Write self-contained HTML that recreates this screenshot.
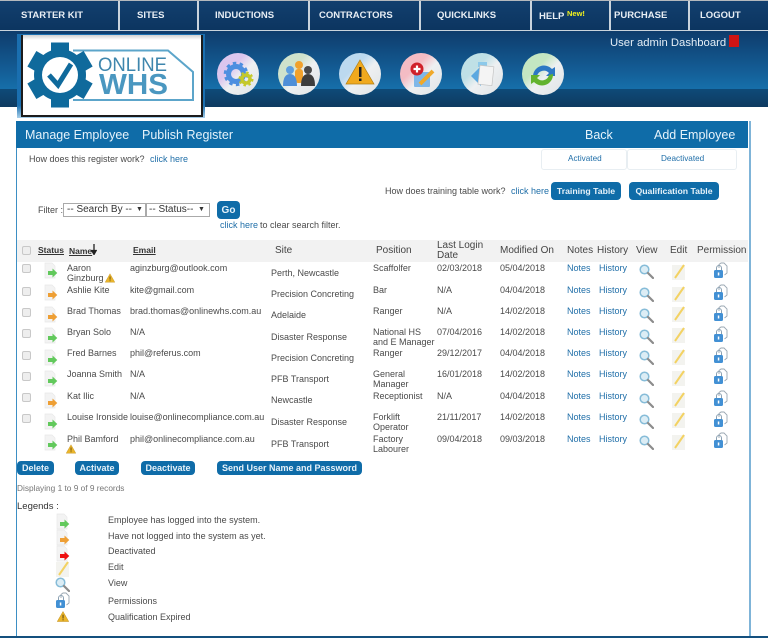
<!DOCTYPE html>
<html><head><meta charset="utf-8"><style>
html,body{margin:0;padding:0;background:#fff}
body{width:768px;height:638px;position:relative;overflow:hidden;font-family:"Liberation Sans",sans-serif;font-size:9px;color:#4a4a4a;filter:blur(.35px)}
div,a,svg,span.a{position:absolute}
.t{line-height:12px;white-space:nowrap}
.l{color:#1f6ea8}
.n{line-height:14px;white-space:nowrap;color:#e8eef4;font-weight:bold;font-size:9.500px;top:9px}
.d{top:1px;width:2px;height:29px;background:#c9d3dc}
.h{top:128px;line-height:15px;font-size:12.500px;color:#e6f3fb;white-space:nowrap}
.b{background:#0f6ca8;border-radius:4px;color:#e6f2fa;font-weight:bold;text-align:center;white-space:nowrap;font-size:9px}
.c{left:22px;width:7px;height:7px;border:1px solid #c8c8c8;border-radius:2px;background:#eee}
.th{font-size:10px;color:#444}
.u{font-weight:bold;text-decoration:underline;color:#333;font-size:8.500px}
.r{border-radius:50%;width:42px;height:42px;top:53px}
</style></head><body>
<svg width="0" height="0" style="left:0;top:0"><defs>
<symbol id="pg" viewBox="0 0 14 17"><path d="M1 1h7l3 3v12H1z" fill="#f3f3f3" stroke="#e8e8e8" stroke-width=".7"/></symbol>
<symbol id="sg" viewBox="0 0 14 17"><use href="#pg" width="14" height="17"/><path d="M4 9h4.500V6.500l4.800 4.500-4.800 4.500V13H4z" fill="#62c95c"/></symbol>
<symbol id="so" viewBox="0 0 14 17"><use href="#pg" width="14" height="17"/><path d="M4 9h4.500V6.500l4.800 4.500-4.800 4.500V13H4z" fill="#ee9f35"/></symbol>
<symbol id="sr" viewBox="0 0 14 17"><use href="#pg" width="14" height="17"/><path d="M4 9h4.500V6.500l4.800 4.500-4.800 4.500V13H4z" fill="#ee1111"/></symbol>
<symbol id="vw" viewBox="0 0 15 15"><circle cx="5.500" cy="5.500" r="4.300" fill="#dcedf5" stroke="#86bcd8" stroke-width="1.500"/><path d="M9 9l5 5" stroke="#8c8c8c" stroke-width="2.200" stroke-linecap="round"/></symbol>
<symbol id="ed" viewBox="0 0 14 16"><rect x="0" y="1" width="13" height="15" fill="#f3f3ef"/><path d="M3 14L12 1" stroke="#f3d263" stroke-width="2"/></symbol>
<symbol id="pm" viewBox="0 0 14 17"><path d="M5 6V2.500L7 1h3l3 3v7l-2.500 2" fill="#fff" stroke="#9aa7b2" stroke-width=".9"/><path d="M2.500 8V6a2.500 2.500 0 0 1 5 0v2" fill="none" stroke="#8aa0b2" stroke-width="1"/><rect x="0" y="8" width="9" height="8" rx="1.500" fill="#4290d4"/><rect x="3.800" y="10.500" width="1.500" height="3" fill="#fff"/></symbol>
<symbol id="wn" viewBox="0 0 13 12"><path d="M6.500 .5L12.800 11.500H.2z" fill="#eab52b" stroke="#c28e1c" stroke-width=".5"/><rect x="6" y="4" width="1.100" height="4.200" fill="#5a4410"/><rect x="6" y="9" width="1.100" height="1.200" fill="#5a4410"/></symbol>
</defs></svg>

<!-- nav -->
<div style="left:0;top:0;width:768px;height:31px;background:linear-gradient(#123f6e,#0c3560);border-top:1px solid #b5b9bd;box-sizing:border-box;border-bottom:1px solid #c9d3dc"></div>
<div class="d" style="left:118px"></div><div class="d" style="left:197px"></div><div class="d" style="left:308px"></div><div class="d" style="left:419px"></div><div class="d" style="left:530px"></div><div class="d" style="left:609px"></div><div class="d" style="left:688px"></div>
<div class="n" style="left:21px">STARTER KIT</div>
<div class="n" style="left:137px">SITES</div>
<div class="n" style="left:215px">INDUCTIONS</div>
<div class="n" style="left:319px">CONTRACTORS</div>
<div class="n" style="left:437px">QUICKLINKS</div>
<div class="n" style="left:539px;top:10px">HELP</div>
<div class="t" style="left:567px;top:9px;font-size:7.500px;font-weight:bold;color:#f2f21e;line-height:10px">New!</div>
<div class="n" style="left:614px">PURCHASE</div>
<div class="n" style="left:700px">LOGOUT</div>

<!-- banner -->
<div style="left:0;top:31px;width:768px;height:59px;background:linear-gradient(#0e3c6c,#145f98 70%,#1670ab)"></div>
<div style="left:0;top:89px;width:768px;height:18px;background:linear-gradient(#0e4a78,#0e3a60)"></div>
<div class="t" style="left:610px;top:37px;color:#e4eef6;font-size:11.300px">User admin Dashboard</div>
<div style="left:729px;top:35px;width:10px;height:12px;background:#cf1414"></div>

<!-- logo -->
<div style="left:17px;top:34px;width:188px;height:84px;background:linear-gradient(#1a6fb0 85%,#a9d0ea)"></div>
<div style="left:21px;top:35px;width:182px;height:82px;background:#1c1c1c"></div>
<div style="left:23px;top:35px;width:178px;height:80px;background:linear-gradient(#d0d0d0,#fff 5px)"></div>
<svg style="left:0;top:0" width="220" height="120" viewBox="0 0 220 120">
<path d="M73 50.500H168L193 72V100H73" fill="none" stroke="#5ca5ca" stroke-width="2"/>
<g fill="#0f6a9c" transform="translate(60 75)">
<circle r="26"/>
<rect x="-9" y="-32.500" width="18" height="65"/>
<rect x="-9" y="-32.500" width="18" height="65" transform="rotate(60)"/>
<rect x="-9" y="-32.500" width="18" height="65" transform="rotate(120)"/>
</g>
<circle cx="60" cy="75" r="18" fill="#fff"/>
<path d="M49 75l9 10 13-21" fill="none" stroke="#0f6a9c" stroke-width="5"/>
<text x="98" y="71" font-family="Liberation Sans" font-size="19" fill="#3e86ad" textLength="69" lengthAdjust="spacingAndGlyphs">ONLINE</text>
<text x="99" y="94" font-family="Liberation Sans" font-size="28.500" font-weight="bold" fill="#4a97c0" textLength="69" lengthAdjust="spacingAndGlyphs">WHS</text>
</svg>

<!-- round icons -->
<div class="r" style="left:217px;background:linear-gradient(135deg,#dcc6ee 35%,#eef0f2 55%,#dfe3e5)"></div>
<div class="r" style="left:278px;background:linear-gradient(135deg,#cfe2cc 35%,#eef0f2 55%,#dfe3e5)"></div>
<div class="r" style="left:339px;background:linear-gradient(135deg,#bcd9ef 35%,#eef0f2 55%,#dfe3e5)"></div>
<div class="r" style="left:400px;background:linear-gradient(135deg,#f4bcc4 35%,#eef0f2 55%,#dfe3e5)"></div>
<div class="r" style="left:461px;background:linear-gradient(135deg,#bfe0e6 35%,#eef0f2 55%,#dfe3e5)"></div>
<div class="r" style="left:522px;background:linear-gradient(135deg,#c4e6c2 35%,#eef0f2 55%,#dfe3e5)"></div>
<svg style="left:200px;top:40px" width="370" height="70" viewBox="200 40 370 70">
<circle cx="236" cy="74" r="7.500" fill="none" stroke="#4d8fe0" stroke-width="5"/><circle cx="236" cy="74" r="11" fill="none" stroke="#4d8fe0" stroke-width="2.500" stroke-dasharray="3.500 3.400"/>
<circle cx="246" cy="79" r="4" fill="none" stroke="#c5c92a" stroke-width="3.500"/><circle cx="246" cy="79" r="6.500" fill="none" stroke="#c5c92a" stroke-width="2" stroke-dasharray="2.500 2.600"/>
<circle cx="299" cy="65" r="4" fill="#f1a12c"/><rect x="295" y="69" width="8" height="14" rx="3" fill="#f1a12c"/>
<circle cx="290" cy="70" r="4" fill="#5d9ee0"/><path d="M283 86q0-12 7-12t7 12z" fill="#4f8fd8"/>
<circle cx="308" cy="70" r="4" fill="#4a4a4a"/><path d="M301 86q0-12 7-12t7 12z" fill="#3d3d3d"/>
<path d="M360 60L374 84H346z" fill="#f0a91e" stroke="#b07f15" stroke-width=".7"/><rect x="359" y="67" width="2.500" height="10" fill="#222"/><rect x="359" y="78.500" width="2.500" height="2.500" fill="#222"/>
<rect x="414" y="72" width="16" height="15" rx="1" fill="#7fb7e8"/><path d="M420 84L433 71" stroke="#f0a92a" stroke-width="4"/><circle cx="417" cy="69" r="6.500" fill="#d0202a"/><path d="M413.500 69h7M417 65.500v7" stroke="#fff" stroke-width="2.200"/>
<path d="M471 76l10-10v20z" fill="#5ba8e0"/><path d="M478 62h9v5h-9z" fill="#8cc9ea"/><rect x="479" y="66" width="14" height="19" transform="rotate(6 486 75)" fill="#f4f4f4" stroke="#c4c4c4" stroke-width=".7"/>
<path d="M533 76a11 11 0 0 1 19-7l3-2v9h-9l3-3a7 7 0 0 0-12 3z" fill="#2d78c4"/><path d="M553 74a11 11 0 0 1-19 8l-3 2v-9h9l-3 3a7 7 0 0 0 12-3z" fill="#62b32e"/>
</svg>

<!-- panel -->
<div style="left:16px;top:121px;width:732px;height:515px;border-left:1px solid #3d8fc4;border-right:2px solid #7fb4d8"></div>
<div style="left:0;top:636px;width:768px;height:2px;background:#14507e"></div>
<div style="left:16px;top:121px;width:732px;height:27px;background:#0f6ca8"></div>
<div class="h" style="left:25px">Manage Employee</div>
<div class="h" style="left:142px">Publish Register</div>
<div class="h" style="left:585px">Back</div>
<div class="h" style="left:654px">Add Employee</div>

<div class="t" style="left:29px;top:153px">How does this register work?</div>
<div class="t l" style="left:150px;top:153px">click here</div>
<div style="left:541px;top:149px;width:84px;height:19px;border:1px solid #e8eef2;border-radius:3px"></div>
<div style="left:627px;top:149px;width:108px;height:19px;border:1px solid #e8eef2;border-radius:3px"></div>
<div class="t l" style="left:568px;top:153px;font-size:8.200px">Activated</div>
<div class="t l" style="left:661px;top:153px;font-size:8.200px">Deactivated</div>

<div class="t" style="left:385px;top:185px">How does training table work?</div>
<div class="t l" style="left:511px;top:185px">click here</div>
<div class="b" style="left:551px;top:182px;width:70px;height:18px;line-height:18px;font-size:8.700px">Training Table</div>
<div class="b" style="left:629px;top:182px;width:90px;height:18px;line-height:18px;font-size:8.700px">Qualification Table</div>

<div class="t" style="left:38px;top:204px">Filter :</div>
<div class="t" style="left:63px;top:203px;width:83px;height:14px;box-sizing:border-box;border:1px solid #aaa;background:#fff;color:#333;padding-left:3px;font-size:10px">-- Search By --<span style="position:absolute;left:72px;top:0;font-size:7px">&#9660;</span></div>
<div class="t" style="left:146px;top:203px;width:64px;height:14px;box-sizing:border-box;border:1px solid #aaa;background:#fff;color:#333;padding-left:2px;font-size:10px">-- Status--<span style="position:absolute;left:51px;top:0;font-size:7px">&#9660;</span></div>
<div class="b" style="left:217px;top:201px;width:23px;height:18px;line-height:19px;font-size:10px">Go</div>
<div class="t l" style="left:220px;top:219px">click here</div>
<div class="t" style="left:260px;top:219px">to clear search filter.</div>

<!-- table head -->
<div style="left:17px;top:240px;width:731px;height:22px;background:#f2f2f2"></div>
<div class="c" style="top:246px"></div>
<div class="t u" style="left:38px;top:244px">Status</div>
<div class="t u" style="left:69px;top:245px">Name</div>
<svg style="left:91px;top:244px" width="6" height="11" viewBox="0 0 6 11"><path d="M3 0v9M.8 6.500L3 10.500l2.200-4z" stroke="#222" stroke-width="1.300" fill="#222"/></svg>
<div class="t u" style="left:133px;top:244px">Email</div>
<div class="t th" style="left:275px;top:245px">Site</div>
<div class="t th" style="left:376px;top:245px">Position</div>
<div class="t th" style="left:437px;top:241px;line-height:10px">Last Login<br>Date</div>
<div class="t th" style="left:500px;top:245px">Modified On</div>
<div class="t th" style="left:567px;top:245px">Notes</div>
<div class="t th" style="left:597px;top:245px">History</div>
<div class="t th" style="left:636px;top:245px">View</div>
<div class="t th" style="left:670px;top:245px">Edit</div>
<div class="t th" style="left:697px;top:245px">Permission</div>

<!-- checkboxes -->
<div class="c" style="top:264px"></div><div class="c" style="top:287px"></div><div class="c" style="top:308px"></div><div class="c" style="top:329px"></div><div class="c" style="top:351px"></div><div class="c" style="top:372px"></div><div class="c" style="top:393px"></div><div class="c" style="top:414px"></div>

<!-- status icons -->
<svg style="left:44px;top:262px" width="14" height="17"><use href="#sg"/></svg>
<svg style="left:44px;top:284px" width="14" height="17"><use href="#so"/></svg>
<svg style="left:44px;top:306px" width="14" height="17"><use href="#so"/></svg>
<svg style="left:44px;top:327px" width="14" height="17"><use href="#sg"/></svg>
<svg style="left:44px;top:349px" width="14" height="17"><use href="#sg"/></svg>
<svg style="left:44px;top:370px" width="14" height="17"><use href="#sg"/></svg>
<svg style="left:44px;top:392px" width="14" height="17"><use href="#so"/></svg>
<svg style="left:44px;top:413px" width="14" height="17"><use href="#sg"/></svg>
<svg style="left:44px;top:434px" width="14" height="17"><use href="#sg"/></svg>

<!-- names -->
<div class="t" style="left:67px;top:262px">Aaron</div>
<div class="t" style="left:67px;top:272px">Ginzburg</div>
<svg style="left:105px;top:273px" width="10" height="10"><use href="#wn"/></svg>
<div class="t" style="left:67px;top:284px">Ashlie Kite</div>
<div class="t" style="left:67px;top:305px">Brad Thomas</div>
<div class="t" style="left:67px;top:326px">Bryan Solo</div>
<div class="t" style="left:67px;top:347px">Fred Barnes</div>
<div class="t" style="left:67px;top:368px">Joanna Smith</div>
<div class="t" style="left:67px;top:390px">Kat Ilic</div>
<div class="t" style="left:67px;top:411px">Louise Ironside</div>
<div class="t" style="left:67px;top:433px">Phil Bamford</div>
<svg style="left:66px;top:444px" width="10" height="10"><use href="#wn"/></svg>

<!-- emails -->
<div class="t" style="left:130px;top:262px">aginzburg@outlook.com</div>
<div class="t" style="left:130px;top:284px">kite@gmail.com</div>
<div class="t" style="left:130px;top:305px">brad.thomas@onlinewhs.com.au</div>
<div class="t" style="left:130px;top:326px">N/A</div>
<div class="t" style="left:130px;top:347px">phil@referus.com</div>
<div class="t" style="left:130px;top:368px">N/A</div>
<div class="t" style="left:130px;top:390px">N/A</div>
<div class="t" style="left:130px;top:411px">louise@onlinecompliance.com.au</div>
<div class="t" style="left:130px;top:433px">phil@onlinecompliance.com.au</div>

<!-- sites -->
<div class="t" style="left:271px;top:267px">Perth, Newcastle</div>
<div class="t" style="left:271px;top:288px">Precision Concreting</div>
<div class="t" style="left:271px;top:309px">Adelaide</div>
<div class="t" style="left:271px;top:331px">Disaster Response</div>
<div class="t" style="left:271px;top:352px">Precision Concreting</div>
<div class="t" style="left:271px;top:373px">PFB Transport</div>
<div class="t" style="left:271px;top:394px">Newcastle</div>
<div class="t" style="left:271px;top:416px">Disaster Response</div>
<div class="t" style="left:271px;top:438px">PFB Transport</div>

<!-- positions -->
<div class="t" style="left:373px;top:262px">Scaffolfer</div>
<div class="t" style="left:373px;top:284px">Bar</div>
<div class="t" style="left:373px;top:305px">Ranger</div>
<div class="t" style="left:373px;top:327px;line-height:10px">National HS<br>and E Manager</div>
<div class="t" style="left:373px;top:347px">Ranger</div>
<div class="t" style="left:373px;top:369px;line-height:10px">General<br>Manager</div>
<div class="t" style="left:373px;top:390px">Receptionist</div>
<div class="t" style="left:373px;top:412px;line-height:10px">Forklift<br>Operator</div>
<div class="t" style="left:373px;top:434px;line-height:10px">Factory<br>Labourer</div>

<!-- last login -->
<div class="t" style="left:437px;top:262px">02/03/2018</div>
<div class="t" style="left:437px;top:284px">N/A</div>
<div class="t" style="left:437px;top:305px">N/A</div>
<div class="t" style="left:437px;top:326px">07/04/2016</div>
<div class="t" style="left:437px;top:347px">29/12/2017</div>
<div class="t" style="left:437px;top:368px">16/01/2018</div>
<div class="t" style="left:437px;top:390px">N/A</div>
<div class="t" style="left:437px;top:411px">21/11/2017</div>
<div class="t" style="left:437px;top:433px">09/04/2018</div>

<!-- modified -->
<div class="t" style="left:500px;top:262px">05/04/2018</div>
<div class="t" style="left:500px;top:284px">04/04/2018</div>
<div class="t" style="left:500px;top:305px">14/02/2018</div>
<div class="t" style="left:500px;top:326px">14/02/2018</div>
<div class="t" style="left:500px;top:347px">04/04/2018</div>
<div class="t" style="left:500px;top:368px">14/02/2018</div>
<div class="t" style="left:500px;top:390px">04/04/2018</div>
<div class="t" style="left:500px;top:411px">14/02/2018</div>
<div class="t" style="left:500px;top:433px">09/03/2018</div>

<!-- notes -->
<div class="t l" style="left:567px;top:262px">Notes</div><div class="t l" style="left:599px;top:262px">History</div>
<div class="t l" style="left:567px;top:284px">Notes</div><div class="t l" style="left:599px;top:284px">History</div>
<div class="t l" style="left:567px;top:305px">Notes</div><div class="t l" style="left:599px;top:305px">History</div>
<div class="t l" style="left:567px;top:326px">Notes</div><div class="t l" style="left:599px;top:326px">History</div>
<div class="t l" style="left:567px;top:347px">Notes</div><div class="t l" style="left:599px;top:347px">History</div>
<div class="t l" style="left:567px;top:368px">Notes</div><div class="t l" style="left:599px;top:368px">History</div>
<div class="t l" style="left:567px;top:390px">Notes</div><div class="t l" style="left:599px;top:390px">History</div>
<div class="t l" style="left:567px;top:411px">Notes</div><div class="t l" style="left:599px;top:411px">History</div>
<div class="t l" style="left:567px;top:433px">Notes</div><div class="t l" style="left:599px;top:433px">History</div>

<!-- view -->
<svg style="left:639px;top:264px" width="15" height="15"><use href="#vw"/></svg>
<svg style="left:639px;top:287px" width="15" height="15"><use href="#vw"/></svg>
<svg style="left:639px;top:308px" width="15" height="15"><use href="#vw"/></svg>
<svg style="left:639px;top:329px" width="15" height="15"><use href="#vw"/></svg>
<svg style="left:639px;top:350px" width="15" height="15"><use href="#vw"/></svg>
<svg style="left:639px;top:371px" width="15" height="15"><use href="#vw"/></svg>
<svg style="left:639px;top:393px" width="15" height="15"><use href="#vw"/></svg>
<svg style="left:639px;top:414px" width="15" height="15"><use href="#vw"/></svg>
<svg style="left:639px;top:435px" width="15" height="15"><use href="#vw"/></svg>

<!-- edit -->
<svg style="left:672px;top:264px" width="14" height="16"><use href="#ed"/></svg>
<svg style="left:672px;top:286px" width="14" height="16"><use href="#ed"/></svg>
<svg style="left:672px;top:306px" width="14" height="16"><use href="#ed"/></svg>
<svg style="left:672px;top:327px" width="14" height="16"><use href="#ed"/></svg>
<svg style="left:672px;top:349px" width="14" height="16"><use href="#ed"/></svg>
<svg style="left:672px;top:370px" width="14" height="16"><use href="#ed"/></svg>
<svg style="left:672px;top:392px" width="14" height="16"><use href="#ed"/></svg>
<svg style="left:672px;top:412px" width="14" height="16"><use href="#ed"/></svg>
<svg style="left:672px;top:434px" width="14" height="16"><use href="#ed"/></svg>

<!-- permission -->
<svg style="left:714px;top:262px" width="14" height="17"><use href="#pm"/></svg>
<svg style="left:714px;top:284px" width="14" height="17"><use href="#pm"/></svg>
<svg style="left:714px;top:305px" width="14" height="17"><use href="#pm"/></svg>
<svg style="left:714px;top:326px" width="14" height="17"><use href="#pm"/></svg>
<svg style="left:714px;top:347px" width="14" height="17"><use href="#pm"/></svg>
<svg style="left:714px;top:368px" width="14" height="17"><use href="#pm"/></svg>
<svg style="left:714px;top:390px" width="14" height="17"><use href="#pm"/></svg>
<svg style="left:714px;top:411px" width="14" height="17"><use href="#pm"/></svg>
<svg style="left:714px;top:432px" width="14" height="17"><use href="#pm"/></svg>

<!-- buttons -->
<div class="b" style="left:17px;top:461px;width:37px;height:14px;line-height:14px">Delete</div>
<div class="b" style="left:75px;top:461px;width:44px;height:14px;line-height:14px">Activate</div>
<div class="b" style="left:141px;top:461px;width:54px;height:14px;line-height:14px">Deactivate</div>
<div class="b" style="left:217px;top:461px;width:145px;height:14px;line-height:14px">Send User Name and Password</div>

<div class="t" style="left:17px;top:482px;font-size:8.300px;color:#777">Displaying 1 to 9 of 9 records</div>
<div class="t" style="left:17px;top:501px;font-size:9.500px;color:#333">Legends :</div>

<svg style="left:56px;top:513px" width="14" height="17"><use href="#sg"/></svg>
<svg style="left:56px;top:529px" width="14" height="17"><use href="#so"/></svg>
<svg style="left:56px;top:545px" width="14" height="17"><use href="#sr"/></svg>
<svg style="left:56px;top:561px" width="14" height="16"><use href="#ed"/></svg>
<svg style="left:55px;top:577px" width="15" height="15"><use href="#vw"/></svg>
<svg style="left:56px;top:592px" width="14" height="17"><use href="#pm"/></svg>
<svg style="left:57px;top:611px" width="12" height="11"><use href="#wn"/></svg>

<div class="t" style="left:108px;top:514px">Employee has logged into the system.</div>
<div class="t" style="left:108px;top:530px">Have not logged into the system as yet.</div>
<div class="t" style="left:108px;top:545px">Deactivated</div>
<div class="t" style="left:108px;top:561px">Edit</div>
<div class="t" style="left:108px;top:577px">View</div>
<div class="t" style="left:108px;top:595px">Permissions</div>
<div class="t" style="left:108px;top:611px">Qualification Expired</div>
</body></html>
